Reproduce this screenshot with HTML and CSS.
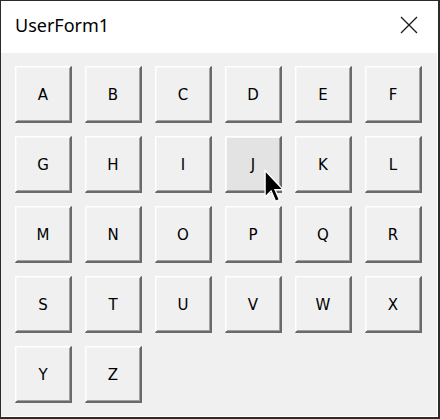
FILE: index.html
```html
<!DOCTYPE html>
<html>
<head>
<meta charset="utf-8">
<link rel="stylesheet" href="styles.css">
</head>
<body>
<div class="window">
  <div class="titlebar">
    <span class="title">UserForm1</span>
    <svg class="close" width="18" height="18" viewBox="0 0 18 18"><path d="M1 1 L17 17 M17 1 L1 17" stroke="#1a1a1a" stroke-width="1.3" fill="none"/></svg>
  </div>
  <div class="client">
    <div class="grid">
      <div class="btn">A</div><div class="btn">B</div><div class="btn">C</div><div class="btn">D</div><div class="btn">E</div><div class="btn">F</div>
      <div class="btn">G</div><div class="btn">H</div><div class="btn">I</div><div class="btn hover">J
        <svg class="cursor" width="22" height="36" viewBox="0 0 20 32"><path d="M1 1 L1 25 L6.5 19.5 L10.5 29 L14 27.5 L10 18.5 L17.5 18.5 Z" fill="#000" stroke="#fff" stroke-width="1.2" stroke-linejoin="miter"/></svg>
      </div><div class="btn">K</div><div class="btn">L</div>
      <div class="btn">M</div><div class="btn">N</div><div class="btn">O</div><div class="btn">P</div><div class="btn">Q</div><div class="btn">R</div>
      <div class="btn">S</div><div class="btn">T</div><div class="btn">U</div><div class="btn">V</div><div class="btn">W</div><div class="btn">X</div>
      <div class="btn">Y</div><div class="btn">Z</div>
    </div>
  </div>
</div>
</body>
</html>
```
FILE: styles.css
```css
html, body {
  margin: 0;
  padding: 0;
  background: #ffffff;
}
.window {
  width: 440px;
  height: 419px;
  box-sizing: border-box;
  border-style: solid;
  border-color: #2b2b2b;
  border-width: 1px 2px 2px 1px;
  display: flex;
  flex-direction: column;
  background: #ffffff;
}
.titlebar {
  height: 52px;
  background: #ffffff;
  display: flex;
  align-items: center;
  justify-content: space-between;
  padding: 0 20px 0 14px;
}
.title {
  font-family: "Noto Sans", "Open Sans", sans-serif;
  font-size: 18px;
  color: #000;
  margin-top: -4px;
}
.close {
  display: block;
  margin-top: -4px;
}
.client {
  flex: 1;
  background: #f0f0f0;
  border-right: 1px solid #ffffff;
  border-bottom: 1px solid #ffffff;
  padding: 13px 0 0 14px;
}
.grid {
  display: grid;
  grid-template-columns: repeat(6, 57px);
  grid-auto-rows: 57px;
  column-gap: 13px;
  row-gap: 13px;
}
.btn {
  position: relative;
  box-sizing: border-box;
  background: #f0f0f0;
  border-style: solid;
  border-width: 1px 2px 2px 1px;
  border-color: #ffffff #6a6a6a #6a6a6a #ffffff;
  box-shadow: inset 1px 1px 0 #f7f7f7, inset -1px -1px 0 #a0a0a0;
  display: flex;
  align-items: center;
  justify-content: center;
  font-family: "DejaVu Sans", "Liberation Sans", sans-serif;
  font-size: 15px;
  color: #000;
  padding-top: 1px;
}
.btn.hover {
  background: #e3e3e3;
}
.cursor {
  position: absolute;
  left: 38px;
  top: 32px;
}
```
